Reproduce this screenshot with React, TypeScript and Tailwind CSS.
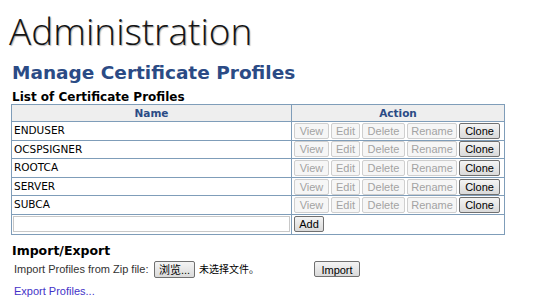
import React from "react";

const profiles = ["ENDUSER", "OCSPSIGNER", "ROOTCA", "SERVER", "SUBCA"];

const verdana = { fontFamily: "'DejaVu Sans', Verdana, sans-serif" };
const tahoma = { fontFamily: "'Liberation Sans', Tahoma, Arial, sans-serif" };
const cjk = { fontFamily: "'Liberation Sans', 'Noto Sans CJK SC', sans-serif" };

function DisabledButton({ label, w }: { label: string; w: string }) {
  return (
    <button
      disabled
      className={`${w} h-[16px] border border-[#cfcfcf] bg-[#f6f6f6] text-[#a3a3a3] text-[11px] leading-[14px] text-center rounded-[2px]`}
      style={tahoma}
    >
      {label}
    </button>
  );
}

function Button({ label, w }: { label: string; w: string }) {
  return (
    <button
      className={`${w} h-[16px] border border-[#707070] bg-gradient-to-b from-[#f4f4f4] to-[#dadada] text-black text-[11px] leading-[14px] text-center rounded-[2px]`}
      style={tahoma}
    >
      {label}
    </button>
  );
}

export default function App() {
  return (
    <div
      className="w-[554px] h-[308px] bg-white overflow-hidden text-black"
      style={verdana}
    >
      <h1
        className="pl-[9px] pt-[9px] text-[37px] leading-[44px] font-light text-[#141414] [text-shadow:1px_1px_1px_rgba(0,0,0,0.3)]"
        style={{ fontFamily: "'Open Sans', sans-serif" }}
      >
        Administration
      </h1>
      <h2 className="pl-[12px] mt-[8px] text-[18.5px] leading-[24px] font-bold text-[#2b4b85]">
        Manage Certificate Profiles
      </h2>
      <h3 className="pl-[12px] mt-[5px] text-[12px] leading-[14px] font-bold">
        List of Certificate Profiles
      </h3>

      <div className="ml-[11px] w-[494px] border border-[#7f9db9] text-[10.5px]">
        <div className="flex h-[17px] bg-[#eeeeee] border-b border-[#7f9db9] font-bold text-[#2b4b85] leading-[16px]">
          <div className="w-[280px] border-r border-[#7f9db9] text-center">Name</div>
          <div className="flex-1 text-center">Action</div>
        </div>
        {profiles.map((p) => (
          <div key={p} className="flex h-[18.6px] border-b border-[#7f9db9]">
            <div className="w-[280px] border-r border-[#7f9db9] pl-[2px] flex items-center">
              {p}
            </div>
            <div className="flex-1 flex items-center gap-[2px] pl-[2px]">
              <DisabledButton label="View" w="w-[35px]" />
              <DisabledButton label="Edit" w="w-[29px]" />
              <DisabledButton label="Delete" w="w-[43px]" />
              <DisabledButton label="Rename" w="w-[50px]" />
              <Button label="Clone" w="w-[41px]" />
            </div>
          </div>
        ))}
        <div className="flex h-[18.6px]">
          <div className="w-[280px] border-r border-[#7f9db9] flex items-center pl-[1px]">
            <input className="w-[277px] h-[16px] border border-[#c8c8c8] outline-none" />
          </div>
          <div className="flex-1 flex items-center pl-[2px]">
            <Button label="Add" w="w-[30px]" />
          </div>
        </div>
      </div>

      <h3 className="pl-[12px] mt-[9px] text-[12.5px] leading-[14px] font-bold">
        Import/Export
      </h3>
      <div
        className="flex items-center pl-[14px] mt-[3px] h-[17px] text-[11px] text-[#333]"
        style={tahoma}
      >
        <span className="w-[134px] shrink-0 whitespace-nowrap">Import Profiles from Zip file:</span>
        <button
          className="ml-[6px] shrink-0 w-[41px] h-[17px] border border-[#707070] bg-gradient-to-b from-[#f4f4f4] to-[#dadada] rounded-[2px] text-[11px] text-black"
          style={cjk}
        >
          浏览...
        </button>
        <span className="ml-[4px] shrink-0 w-[60px] whitespace-nowrap text-[10px] text-black" style={cjk}>
          未选择文件。
        </span>
        <button className="ml-[55px] shrink-0 w-[46px] h-[16px] border border-[#707070] bg-gradient-to-b from-[#f4f4f4] to-[#dadada] rounded-[2px] text-[11px] text-black">
          Import
        </button>
      </div>
      <a
        href="#"
        className="block pl-[14px] mt-[7px] text-[11px] leading-[13px] text-[#4433c8]"
        style={tahoma}
      >
        Export Profiles...
      </a>
    </div>
  );
}
